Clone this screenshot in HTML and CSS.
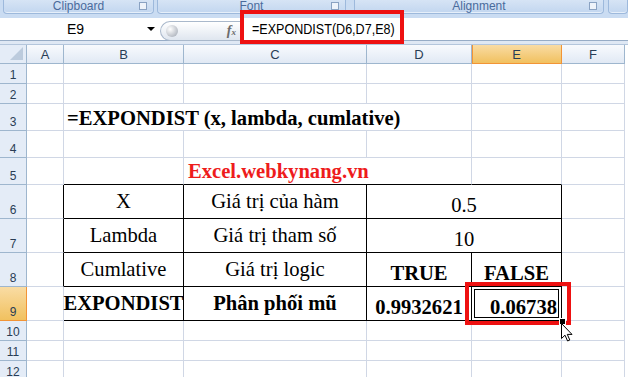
FILE: index.html
```html
<!DOCTYPE html>
<html lang="vi">
<head>
  <meta charset="UTF-8">
  <title>EXPONDIST</title>
  <link rel="stylesheet" href="styles.css">
</head>
<body>

  <div class="ribbon">
    <div class="group g-clip"><span>Clipboard</span><i class="launcher"></i></div>
    <div class="group g-font"><span>Font</span><i class="launcher"></i></div>
    <div class="group g-align"><span>Alignment</span><i class="launcher"></i></div>
    <div class="group g-num"></div>
  </div>

  <div class="formula-bar">
    <div class="name-box"><span>E9</span><i class="arrow"></i></div>
    <div class="fx-pill"><i class="ball"></i><span class="fx">f<sub>x</sub></span></div>
    <div class="formula"><span>=EXPONDIST(D6,D7,E8)</span></div>
  </div>
  <div class="strip"></div>

  <div class="sheet">
    <!-- header -->
    <div class="corner"></div>
    <div class="ch">A</div>
    <div class="ch">B</div>
    <div class="ch">C</div>
    <div class="ch">D</div>
    <div class="ch ch-sel">E</div>
    <div class="ch">F</div>
    <div class="tail"></div>

    <!-- 1 -->
    <div class="rh">1</div>
    <div class="c"></div><div class="c"></div><div class="c"></div><div class="c"></div><div class="c"></div><div class="c"></div><div class="tail"></div>
    <!-- 2 -->
    <div class="rh">2</div>
    <div class="c"></div><div class="c"></div><div class="c"></div><div class="c"></div><div class="c"></div><div class="c"></div><div class="tail"></div>
    <!-- 3 -->
    <div class="rh">3</div>
    <div class="c"></div>
    <div class="c span3 title">=EXPONDIST (x, lambda, cumlative)</div>
    <div class="c"></div><div class="c"></div><div class="tail"></div>
    <!-- 4 -->
    <div class="rh">4</div>
    <div class="c"></div><div class="c"></div><div class="c"></div><div class="c"></div><div class="c"></div><div class="c"></div><div class="tail"></div>
    <!-- 5 -->
    <div class="rh">5</div>
    <div class="c"></div>
    <div class="c bb"></div>
    <div class="c span2 bb site">Excel.webkynang.vn</div>
    <div class="c bb"></div>
    <div class="c"></div><div class="tail"></div>
    <!-- 6 -->
    <div class="rh">6</div>
    <div class="c br"></div>
    <div class="c bx lbl">X</div>
    <div class="c bx lbl">Giá trị của hàm</div>
    <div class="c span2 bx val">0.5</div>
    <div class="c"></div><div class="tail"></div>
    <!-- 7 -->
    <div class="rh">7</div>
    <div class="c br"></div>
    <div class="c bx lbl">Lambda</div>
    <div class="c bx lbl">Giá trị tham số</div>
    <div class="c span2 bx val">10</div>
    <div class="c"></div><div class="tail"></div>
    <!-- 8 -->
    <div class="rh">8</div>
    <div class="c br"></div>
    <div class="c bx lbl">Cumlative</div>
    <div class="c bx lbl">Giá trị logic</div>
    <div class="c bx val bold">TRUE</div>
    <div class="c bx val bold">FALSE</div>
    <div class="c"></div><div class="tail"></div>
    <!-- 9 -->
    <div class="rh rh-sel">9</div>
    <div class="c"></div>
    <div class="c bx lbl bold">EXPONDIST</div>
    <div class="c bx lbl bold">Phân phối mũ</div>
    <div class="c bx val bold">0.9932621</div>
    <div class="c bx val bold num active">0.06738</div>
    <div class="c"></div><div class="tail"></div>
    <!-- 10 -->
    <div class="rh">10</div>
    <div class="c"></div><div class="c"></div><div class="c"></div><div class="c"></div><div class="c"></div><div class="c"></div><div class="tail"></div>
    <!-- 11 -->
    <div class="rh">11</div>
    <div class="c"></div><div class="c"></div><div class="c"></div><div class="c"></div><div class="c"></div><div class="c"></div><div class="tail"></div>
    <!-- 12 -->
    <div class="rh">12</div>
    <div class="c"></div><div class="c"></div><div class="c"></div><div class="c"></div><div class="c"></div><div class="c"></div><div class="tail"></div>
  </div>

  <!-- red callouts drawn over the screenshot -->
  <div class="callout callout-formula"></div>
  <div class="callout callout-cell"></div>
  <i class="fill-handle"></i>
  <svg class="cursor" width="13" height="19" viewBox="0 0 13 19">
    <path d="M0.5 0.5 L0.5 15.5 L4 12.2 L6.6 18 L8.8 17 L6.3 11.4 L11 11.4 Z" fill="#fff" stroke="#000" stroke-width="1"/>
  </svg>

</body>
</html>
```

FILE: styles.css
```css
body {
  margin: 0;
  width: 628px;
  height: 377px;
  overflow: hidden;
  background: #fff;
  position: relative;
  font-family: 'Liberation Sans', Arial, sans-serif;
}

/* ribbon group captions */
.ribbon {
  height: 18px;
  background: #cadcf2;
  display: flex;
  gap: 3px;
  padding-left: 3px;
  box-sizing: border-box;
}
.group {
  position: relative;
  height: 14px;
  box-sizing: border-box;
  border: 1px solid #9db9dc;
  border-top: none;
  border-radius: 0 0 4px 4px;
  background: linear-gradient(#d6e4f5, #c2d6ef);
  box-shadow: inset 0 -1px 0 #e6effa;
  text-align: center;
}
.group span {
  display: block;
  font-size: 12px;
  line-height: 12px;
  color: #4a6b9c;
}
.g-clip { width: 152px; }
.g-font { width: 190px; }
.g-align { width: 252px; margin-left: 5px; }
.g-num { width: 20px; margin-left: 1px; }
.launcher {
  position: absolute;
  right: 6px;
  top: 2px;
  width: 6px;
  height: 6px;
  border: 1px solid #8aa2c2;
  background: #eef3fa;
}

/* formula bar */
.formula-bar {
  display: flex;
  height: 23px;
  background: #fff;
  border-bottom: 1px solid #97acc6;
  box-sizing: border-box;
}
.name-box {
  width: 157px;
  display: flex;
  align-items: center;
  font-size: 14px;
  color: #000;
}
.name-box span {
  flex: 1;
  text-align: center;
  padding-left: 4px;
}
.arrow {
  width: 0;
  height: 0;
  border-left: 4px solid transparent;
  border-right: 4px solid transparent;
  border-top: 4px solid #000;
  margin-right: 2px;
}
.fx-pill {
  margin-left: 3px;
  margin-top: 3px;
  width: 82px;
  height: 20px;
  box-sizing: border-box;
  border: 1px solid #a9b8cb;
  border-right: none;
  border-radius: 10px 0 0 10px;
  background: linear-gradient(#ffffff, #dfe6ef);
  display: flex;
  align-items: center;
  justify-content: space-between;
  padding-left: 5px;
  padding-right: 6px;
}
.ball {
  width: 12px;
  height: 12px;
  border-radius: 50%;
  background: radial-gradient(circle at 35% 35%, #ffffff, #b9bec6 70%, #9aa1ab);
}
.fx {
  font-family: 'Liberation Serif', serif;
  font-style: italic;
  font-weight: bold;
  font-size: 14px;
  color: #6b6b6b;
}
.fx sub {
  font-size: 9px;
  vertical-align: 0;
}
.formula {
  flex: 1;
  padding-left: 10px;
  display: flex;
  align-items: center;
  font-size: 15.5px;
  color: #000;
}
.formula span {
  transform: scaleX(0.81);
  transform-origin: left center;
  white-space: nowrap;
}
.strip {
  height: 3px;
  background: #dfe8f4;
  border-bottom: 1px solid #b4c6dc;
}

/* the sheet */
.sheet {
  display: grid;
  grid-template-columns: 27px 37px 120px 183px 105px 90px 63px 3px;
  grid-template-rows: 19px 20px 20px 27px 27px 27px 34px 34px 34px 34px 20px 20px 20px;
}
.corner {
  position: relative;
  background: #e4ecf7;
  border-right: 1px solid #9eb6ce;
  border-bottom: 1px solid #9eb6ce;
}
.corner::after {
  content: '';
  position: absolute;
  right: 3px;
  bottom: 3px;
  border-left: 13px solid transparent;
  border-bottom: 13px solid #bccbdd;
}
.ch {
  background: linear-gradient(#f8fafd, #e1e9f4);
  border-right: 1px solid #9eb6ce;
  border-bottom: 1px solid #9eb6ce;
  display: flex;
  align-items: center;
  justify-content: center;
  font-size: 13px;
  color: #293d55;
}
.ch-sel {
  background: linear-gradient(#f9dca4, #f1c15f);
  border-right-color: #f29436;
  border-bottom-color: #f29436;
  box-shadow: inset 1px 0 0 #f29436;
}
.rh {
  background: #e4ecf7;
  border-right: 1px solid #9eb6ce;
  border-bottom: 1px solid #9eb6ce;
  display: flex;
  align-items: flex-end;
  justify-content: center;
  padding-bottom: 1px;
  box-sizing: border-box;
  font-size: 12px;
  color: #293d55;
}
.rh-sel {
  background: linear-gradient(#f9dca4, #f1c15f);
  border-right-color: #f29436;
  border-bottom-color: #f29436;
}
.tail {
  background: #fff;
}

.c {
  box-sizing: border-box;
  border-right: 1px solid #d0d7e5;
  border-bottom: 1px solid #d0d7e5;
  display: flex;
  align-items: flex-end;
  justify-content: center;
  white-space: nowrap;
  font-family: 'Liberation Serif', 'Times New Roman', serif;
  font-size: 20.6px;
  line-height: 1;
  color: #000;
}
.span2 { grid-column: span 2; }
.span3 { grid-column: span 3; }
.bb { border-bottom-color: #000; }
.br { border-right-color: #000; }
.bx { border-right-color: #000; border-bottom-color: #000; }
.bold { font-weight: bold; }

.title {
  justify-content: flex-start;
  padding-left: 3px;
  padding-bottom: 1px;
  font-weight: bold;
}
.site {
  justify-content: flex-start;
  padding-left: 4px;
  padding-bottom: 2px;
  font-weight: bold;
  color: #ee1c1c;
}
.lbl {
  padding-bottom: 6px;
}
.val {
  padding-bottom: 2px;
}
.num {
  justify-content: flex-end;
  padding-right: 4px;
}
.active {
  box-shadow: inset 0 0 0 2px #fff, inset 0 0 0 3px #000;
}

/* overlays */
.callout {
  position: absolute;
  border: 4px solid #ee1111;
  box-sizing: border-box;
}
.callout-formula {
  left: 240px;
  top: 10px;
  width: 164px;
  height: 34px;
}
.callout-cell {
  left: 465px;
  top: 282px;
  width: 106px;
  height: 43px;
}
.fill-handle {
  position: absolute;
  left: 559px;
  top: 318px;
  width: 5px;
  height: 5px;
  background: #000;
  border: 1px solid #fff;
}
.cursor {
  position: absolute;
  left: 561px;
  top: 323px;
}
```
